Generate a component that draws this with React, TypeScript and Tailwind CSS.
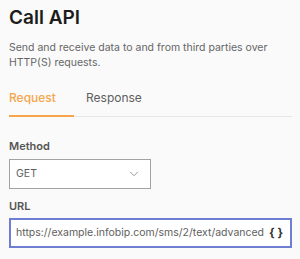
import { ChevronDown } from "lucide-react";

const App = () => {
  return (
    <div
      className="h-[259px] w-[300px] bg-[#fafafa] px-[9px] pt-[4px]"
      style={{ fontFamily: "Inter, 'Noto Sans', sans-serif" }}
    >
      <h1 className="text-[19px] font-semibold leading-[28px] text-[#1c1c1c]">Call API</h1>
      <p className="mt-[8px] text-[10.5px] leading-[15px] text-[#666]">
        Send and receive data to and from third parties over HTTP(S) requests.
      </p>

      <div className="mt-[19px] flex w-[283px] border-b border-[#e6e6e6]">
        <div className="-mb-px w-[65px] border-b-2 border-[#f5a54a] pb-[8px] text-[12px] font-medium text-[#f5a54a]">
          Request
        </div>
        <div className="pl-[12px] text-[12px] text-[#5e5e5e]">Response</div>
      </div>

      <div className="mt-[21px] text-[11px] font-semibold text-[#555]">Method</div>
      <div className="mt-[4px] flex h-[30px] w-[142px] items-center justify-between border border-[#a3a3a3] bg-white pl-[6px] pr-[9px]">
        <span className="text-[10.5px] text-[#5e5e5e]">GET</span>
        <ChevronDown className="size-[14px] text-[#8a8a8a]" strokeWidth={1.5} />
      </div>

      <div className="mt-[9px] text-[11px] font-semibold text-[#555]">URL</div>
      <div className="mt-[4px] flex h-[30px] w-[283px] items-center gap-[5px] border-2 border-[#6f7ed3] bg-white pl-[5px] pr-[9px]">
        <span className="flex-1 whitespace-nowrap text-[10.5px] text-[#5e5e5e]">
          https://example.infobip.com/sms/2/text/advanced
        </span>
        <span className="shrink-0 whitespace-nowrap text-[12px] font-bold text-[#333]">{"{ }"}</span>
      </div>
    </div>
  );
};

export default App;
